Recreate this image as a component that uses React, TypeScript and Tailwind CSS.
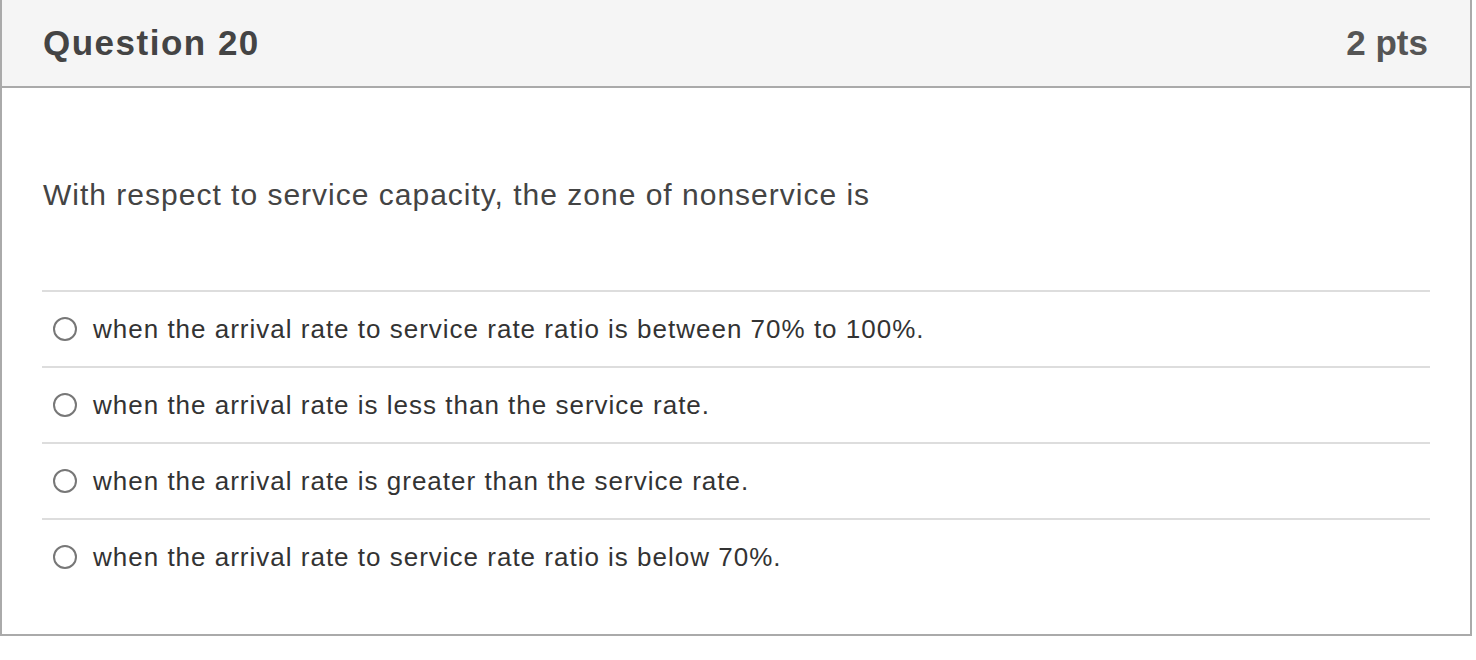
const answers = [
  'when the arrival rate to service rate ratio is between 70% to 100%.',
  'when the arrival rate is less than the service rate.',
  'when the arrival rate is greater than the service rate.',
  'when the arrival rate to service rate ratio is below 70%.',
];

const App = () => {
  return (
    <div className="bg-white min-h-screen font-['Liberation_Sans',Arial,sans-serif]">
      <div className="w-[1472px] border-x-2 border-b-2 border-[#aaaaaa]">
        <div className="h-[88px] bg-[#f5f5f5] border-b-2 border-[#aaaaaa] flex items-center justify-between pl-[41px] pr-[42px]">
          <h2 className="text-[35px] font-bold text-[#444444] tracking-[1.5px]">Question 20</h2>
          <span className="text-[35px] font-bold text-[#555555]">2 pts</span>
        </div>

        <div className="px-[40px] pt-[89px] pb-[40px]">
          <p className="pl-[1px] text-[30px] leading-[36px] text-[#444444] tracking-[1px] mb-[77px]">
            With respect to service capacity, the zone of nonservice is
          </p>

          <div>
            {answers.map((a) => (
              <label key={a} className="h-[76px] border-t-2 border-[#dddddd] flex items-center cursor-pointer">
                <span className="ml-[11px] w-[24px] h-[24px] rounded-full border-2 border-[#777777] bg-white shrink-0"></span>
                <span className="ml-[16px] text-[26px] tracking-[1px] text-[#333333]">{a}</span>
              </label>
            ))}
          </div>
        </div>
      </div>
    </div>
  );
};

export default App;
